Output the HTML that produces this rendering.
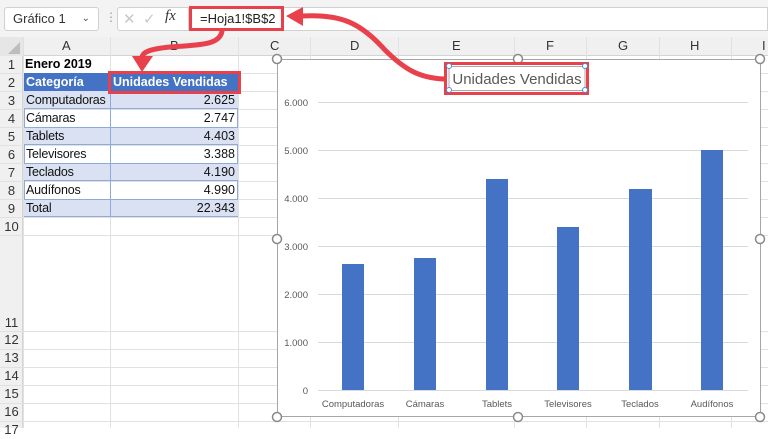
<!DOCTYPE html>
<html><head><meta charset="utf-8"><style>
*{margin:0;padding:0;box-sizing:border-box}
body{width:768px;height:428px;overflow:hidden;background:#fff;font-family:"Liberation Sans",sans-serif;position:relative}
.abs{position:absolute}
.cell{position:absolute;font-size:12.5px;line-height:18px;white-space:nowrap}
</style></head><body>
<div class="abs" style="left:0;top:0;width:768px;height:37px;background:#f3f3f3"></div>
<div class="abs" style="left:4px;top:7px;width:95px;height:24px;background:#fff;border:1px solid #d0d0d0;border-radius:3px;font-size:13px;line-height:22px;padding-left:8px;color:#333">Gráfico 1<span style="position:absolute;right:8px;top:0;font-size:10px;color:#555">⌄</span></div>
<div class="abs" style="left:105px;top:10px;color:#999;font-size:12px">⋮</div>
<div class="abs" style="left:117px;top:7px;width:72px;height:24px;background:#fff;border:1px solid #d0d0d0;border-radius:3px 0 0 3px"></div>
<div class="abs" style="left:123px;top:10px;color:#c8c8c8;font-size:15px">✕</div>
<div class="abs" style="left:143px;top:10px;color:#c8c8c8;font-size:15px">✓</div>
<div class="abs" style="left:165px;top:8px;color:#333;font-size:15px;font-style:italic;font-family:'Liberation Serif',serif">fx</div>
<div class="abs" style="left:189px;top:7px;width:579px;height:24px;background:#fff;border:1px solid #d0d0d0"></div>
<div class="abs" style="left:189px;top:6px;width:95px;height:25px;border:3px solid #e8414b;font-size:13px;line-height:19px;padding-left:8px;color:#222">=Hoja1!$B$2</div>
<div class="abs" style="left:0;top:37px;width:768px;height:19px;background:#f0f0f0;border-bottom:1px solid #d4d4d4"></div>
<div class="abs" style="left:0;top:37px;width:23px;height:19px;background:#e6e6e6"></div>
<svg class="abs" style="left:8px;top:42px" width="12" height="12"><path d="M12 0L12 12L0 12Z" fill="#bdbdbd"/></svg>
<div class="abs" style="left:0;top:56px;width:23px;height:372px;background:#f0f0f0;border-right:1px solid #d4d4d4"></div>
<svg class="abs" style="left:0;top:37px" width="768" height="391">
<g stroke="#e1e1e1" stroke-width="1">
<line x1="23.5" y1="0" x2="23.5" y2="391"/><line x1="110.5" y1="0" x2="110.5" y2="391"/><line x1="238.5" y1="0" x2="238.5" y2="391"/><line x1="310.5" y1="0" x2="310.5" y2="391"/><line x1="398.5" y1="0" x2="398.5" y2="391"/><line x1="514.5" y1="0" x2="514.5" y2="391"/><line x1="586.5" y1="0" x2="586.5" y2="391"/><line x1="659.5" y1="0" x2="659.5" y2="391"/><line x1="731.5" y1="0" x2="731.5" y2="391"/>
<line x1="0" y1="36.5" x2="768" y2="36.5"/><line x1="0" y1="54.5" x2="768" y2="54.5"/><line x1="0" y1="72.5" x2="768" y2="72.5"/><line x1="0" y1="90.5" x2="768" y2="90.5"/><line x1="0" y1="108.5" x2="768" y2="108.5"/><line x1="0" y1="126.5" x2="768" y2="126.5"/><line x1="0" y1="144.5" x2="768" y2="144.5"/><line x1="0" y1="162.5" x2="768" y2="162.5"/><line x1="0" y1="180.5" x2="768" y2="180.5"/><line x1="0" y1="198.5" x2="768" y2="198.5"/><line x1="0" y1="294.5" x2="768" y2="294.5"/><line x1="0" y1="312.5" x2="768" y2="312.5"/><line x1="0" y1="330.5" x2="768" y2="330.5"/><line x1="0" y1="348.5" x2="768" y2="348.5"/><line x1="0" y1="366.5" x2="768" y2="366.5"/><line x1="0" y1="384.5" x2="768" y2="384.5"/>
</g></svg>
<div class="abs" style="top:38px;left:0;width:768px;font-size:13px;color:#333">
<span class="abs" style="left:62px">A</span><span class="abs" style="left:170px">B</span><span class="abs" style="left:270px">C</span><span class="abs" style="left:350px">D</span><span class="abs" style="left:452px">E</span><span class="abs" style="left:546px">F</span><span class="abs" style="left:618px">G</span><span class="abs" style="left:690px">H</span><span class="abs" style="left:762px">I</span></div>
<div class="abs" style="left:0;top:56px;width:23px;font-size:13px;color:#333;text-align:center;line-height:18px">
<div>1</div><div>2</div><div>3</div><div>4</div><div>5</div><div>6</div><div>7</div><div>8</div><div>9</div><div>10</div><div style="height:95px;line-height:173px">11</div><div>12</div><div>13</div><div>14</div><div>15</div><div>16</div><div>17</div></div>
<div class="cell" style="left:25px;top:55px;font-weight:bold">Enero 2019</div>
<div class="abs" style="left:24px;top:73px;width:214px;height:18px;background:#4472c4"></div>
<div class="cell" style="left:26px;top:73px;color:#fff;font-weight:bold">Categoría</div>
<div class="abs" style="left:24px;top:91px;width:214px;height:126px;border:1px solid #8ea9db;border-top:none"></div>
<div class="abs" style="left:24px;top:91px;width:214px;height:18px;background:#d9e1f2;border-bottom:1px solid #8ea9db"></div>
<div class="abs" style="left:24px;top:127px;width:214px;height:18px;background:#d9e1f2;border-top:1px solid #8ea9db;border-bottom:1px solid #8ea9db"></div>
<div class="abs" style="left:24px;top:163px;width:214px;height:18px;background:#d9e1f2;border-top:1px solid #8ea9db;border-bottom:1px solid #8ea9db"></div>
<div class="abs" style="left:24px;top:199px;width:214px;height:18px;background:#d9e1f2;border-top:1px solid #8ea9db;border-bottom:1px solid #8ea9db"></div>
<div class="abs" style="left:110px;top:91px;width:1px;height:126px;background:#8ea9db"></div>
<div class="abs" style="left:26px;top:91px;font-size:12.5px;line-height:18px;color:#111;letter-spacing:-0.2px">Computadoras<br>Cámaras<br>Tablets<br>Televisores<br>Teclados<br>Audífonos<br>Total</div>
<div class="abs" style="left:110px;top:91px;width:125px;text-align:right;font-size:12.5px;line-height:18px;color:#111">2.625<br>2.747<br>4.403<br>3.388<br>4.190<br>4.990<br>22.343</div>
<div class="abs" style="left:108px;top:71px;width:133px;height:23px;border:3px solid #e8414b"></div>
<div class="cell" style="left:113px;top:73px;color:#fff;font-weight:bold">Unidades Vendidas</div>
<div class="abs" style="left:277px;top:59px;width:484px;height:358px;background:#fff;border:1px solid #a6a6a6"></div>
<svg class="abs" style="left:0;top:0" width="768" height="428">
<g stroke="#d9d9d9"><line x1="318" y1="102.5" x2="748" y2="102.5"/><line x1="318" y1="150.5" x2="748" y2="150.5"/><line x1="318" y1="198.5" x2="748" y2="198.5"/><line x1="318" y1="246.5" x2="748" y2="246.5"/><line x1="318" y1="294.5" x2="748" y2="294.5"/><line x1="318" y1="342.5" x2="748" y2="342.5"/><line x1="318" y1="390.5" x2="748" y2="390.5"/></g>
<g fill="#4472c4">
<rect x="342" y="264" width="22" height="126"/><rect x="414" y="258" width="22" height="132"/><rect x="486" y="179" width="22" height="211"/><rect x="557" y="227" width="22" height="163"/><rect x="629" y="189" width="23" height="201"/><rect x="701" y="150" width="22" height="240"/>
</g>
<g font-family="Liberation Sans" font-size="9.5" fill="#595959" text-anchor="end">
<text x="308" y="106">6.000</text><text x="308" y="154">5.000</text><text x="308" y="202">4.000</text><text x="308" y="250">3.000</text><text x="308" y="298">2.000</text><text x="308" y="346">1.000</text><text x="308" y="394">0</text></g>
<g font-family="Liberation Sans" font-size="9.5" fill="#595959" text-anchor="middle">
<text x="353" y="407">Computadoras</text><text x="425" y="407">Cámaras</text><text x="497" y="407">Tablets</text><text x="568" y="407">Televisores</text><text x="640" y="407">Teclados</text><text x="712" y="407">Audífonos</text></g>
<g fill="#fff" stroke="#8a8a8a" stroke-width="1.5">
<circle cx="277" cy="59" r="4.5"/><circle cx="518" cy="59" r="4.5"/><circle cx="760" cy="59" r="4.5"/><circle cx="277" cy="239" r="4.5"/><circle cx="760" cy="239" r="4.5"/><circle cx="277" cy="417" r="4.5"/><circle cx="518" cy="417" r="4.5"/><circle cx="760" cy="417" r="4.5"/></g>
<rect x="445.5" y="63.5" width="142" height="30" fill="#fff" stroke="#e8414b" stroke-width="3"/>
<rect x="449" y="66.5" width="136" height="24" fill="none" stroke="#aaa" stroke-width="1"/>
<text x="517" y="84" font-family="Liberation Sans" font-size="15" fill="#595959" text-anchor="middle">Unidades Vendidas</text>
<g fill="#fff" stroke="#4a8fd8" stroke-width="1"><circle cx="449" cy="66" r="2.5"/><circle cx="585" cy="66" r="2.5"/><circle cx="449" cy="90" r="2.5"/><circle cx="585" cy="90" r="2.5"/></g>
<g fill="none" stroke="#e8414b" stroke-width="5" stroke-linecap="round">
<path d="M222 31 C220 45 200 45 170 47 C150 49 142 52 142 58"/>
<path d="M444 79 C420 78 405 70 385 50 C360 22 340 14 302 16"/>
</g>
<g fill="#e8414b"><path d="M132 56L153 56L142 72Z"/><path d="M303 7L303 26L286 16Z"/></g>
</svg>
</body></html>
